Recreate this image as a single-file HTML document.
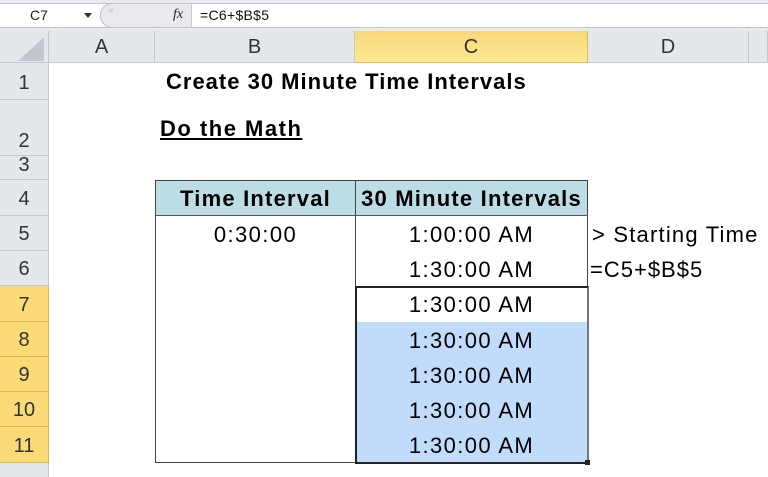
<!DOCTYPE html>
<html><head><style>
*{margin:0;padding:0;box-sizing:border-box}
body{width:768px;height:477px;background:#fff;position:relative;overflow:hidden;font-family:"Liberation Sans",sans-serif}
.a{position:absolute}
.t{position:absolute;font-size:22px;letter-spacing:1.4px;color:#000;white-space:nowrap;line-height:1}
.rh{position:absolute;left:0;width:49px;background:#e4e7ec;border-bottom:1px solid #c5c9cf;border-right:1px solid #c5c9cf;color:#333;font-size:20px;text-align:center;display:flex;align-items:flex-end;justify-content:center;padding-bottom:4px}
.sel{background:#fbdb77;border-bottom:1px solid #e1b852;border-right:1px solid #e1b852}
.ch{position:absolute;top:31px;height:32px;background:#e4e7ec;border-right:1px solid #c5c9cf;border-bottom:1px solid #c5c9cf;color:#333;font-size:20px;text-align:center;line-height:32px}
</style></head><body>
<div class="a" style="left:0;top:0;width:768px;height:31px;background:#e9ebee"></div>
<div class="a" style="left:0;top:3px;width:768px;height:25px;background:#fff;border-top:1px solid #c0c4ca;border-bottom:1px solid #c0c4ca"></div>
<div class="t" style="left:30px;top:8px;font-size:14px;letter-spacing:0;color:#222">C7</div>
<div class="a" style="left:84px;top:13px;width:0;height:0;border-left:4px solid transparent;border-right:4px solid transparent;border-top:5px solid #333"></div>
<div class="a" style="left:100px;top:3px;width:92px;height:25px;background:#e8eaed;border:1px solid #c0c4ca;border-radius:12px 0 0 12px;border-right:1px solid #c8ccd2"></div>
<div class="t" style="left:108px;top:7px;font-size:10px;letter-spacing:0;color:#bbb">=</div>
<div class="t" style="left:173px;top:8px;font-size:14px;letter-spacing:0;font-style:italic;font-family:'Liberation Serif',serif;color:#222">fx</div>
<div class="t" style="left:200px;top:8px;font-size:14px;letter-spacing:0.3px;color:#111">=C6+$B$5</div>
<div class="ch" style="left:0;width:49px"><div class="a" style="left:18px;top:6px;width:0;height:0;border-left:26px solid transparent;border-bottom:24px solid #c4c8ce"></div></div>
<div class="ch" style="left:49px;width:106px">A</div>
<div class="ch" style="left:155px;width:200px">B</div>
<div class="ch" style="left:355px;width:233px;background:linear-gradient(#f8d77a,#fde98f);border-color:#e1b852">C</div>
<div class="ch" style="left:588px;width:161px">D</div>
<div class="ch" style="left:749px;width:19px"></div>
<div class="rh" style="top:63px;height:37px">1</div>
<div class="rh" style="top:100px;height:56px;padding-bottom:2px">2</div>
<div class="rh" style="top:156px;height:24px;padding-bottom:2px">3</div>
<div class="rh" style="top:180px;height:36px">4</div>
<div class="rh" style="top:216px;height:35px">5</div>
<div class="rh" style="top:251px;height:35px">6</div>
<div class="rh sel" style="top:286px;height:36px">7</div>
<div class="rh sel" style="top:322px;height:35px">8</div>
<div class="rh sel" style="top:357px;height:35px">9</div>
<div class="rh sel" style="top:392px;height:35px">10</div>
<div class="rh sel" style="top:427px;height:36px">11</div>
<div class="rh" style="top:463px;height:14px;border-bottom:none"></div>
<div class="t" style="left:166px;top:71px;font-weight:bold;letter-spacing:1px">Create 30 Minute Time Intervals</div>
<div class="t" style="left:160px;top:118px;font-weight:bold;letter-spacing:1.5px;text-decoration:underline">Do the Math</div>
<div class="a" style="left:155px;top:180px;width:433px;height:36px;background:#bcdce6;border:1px solid #555"></div>
<div class="a" style="left:155px;top:180px;width:201px;height:283px;border:1px solid #444"></div>
<div class="a" style="left:355px;top:180px;width:233px;height:107px;border:1px solid #444"></div>
<div class="a" style="left:355px;top:215px;width:233px;height:1px;background:#555"></div>
<div class="a" style="left:356px;top:322px;width:231px;height:140px;background:#c0dcfa"></div>
<div class="a" style="left:355px;top:286px;width:234px;height:178px;border:2px solid #222;border-right-color:#777"></div>
<div class="a" style="left:585px;top:460px;width:5px;height:5px;background:#222"></div>
<div class="t" style="left:155px;width:201px;text-align:center;top:188px;font-weight:bold;letter-spacing:1.2px">Time Interval</div>
<div class="t" style="left:355px;width:233px;text-align:center;top:188px;font-weight:bold;letter-spacing:1.2px">30 Minute Intervals</div>
<div class="t" style="left:155px;width:201px;text-align:center;top:224px">0:30:00</div>
<div class="t" style="left:355px;width:233px;text-align:center;top:224px">1:00:00 AM</div>
<div class="t" style="left:355px;width:233px;text-align:center;top:259px">1:30:00 AM</div>
<div class="t" style="left:355px;width:233px;text-align:center;top:294px">1:30:00 AM</div>
<div class="t" style="left:355px;width:233px;text-align:center;top:330px">1:30:00 AM</div>
<div class="t" style="left:355px;width:233px;text-align:center;top:365px">1:30:00 AM</div>
<div class="t" style="left:355px;width:233px;text-align:center;top:400px">1:30:00 AM</div>
<div class="t" style="left:355px;width:233px;text-align:center;top:435px">1:30:00 AM</div>
<div class="t" style="left:592px;top:224px;letter-spacing:1.2px">&gt; Starting Time</div>
<div class="t" style="left:590px;top:259px;letter-spacing:1px">=C5+$B$5</div>
</body></html>
